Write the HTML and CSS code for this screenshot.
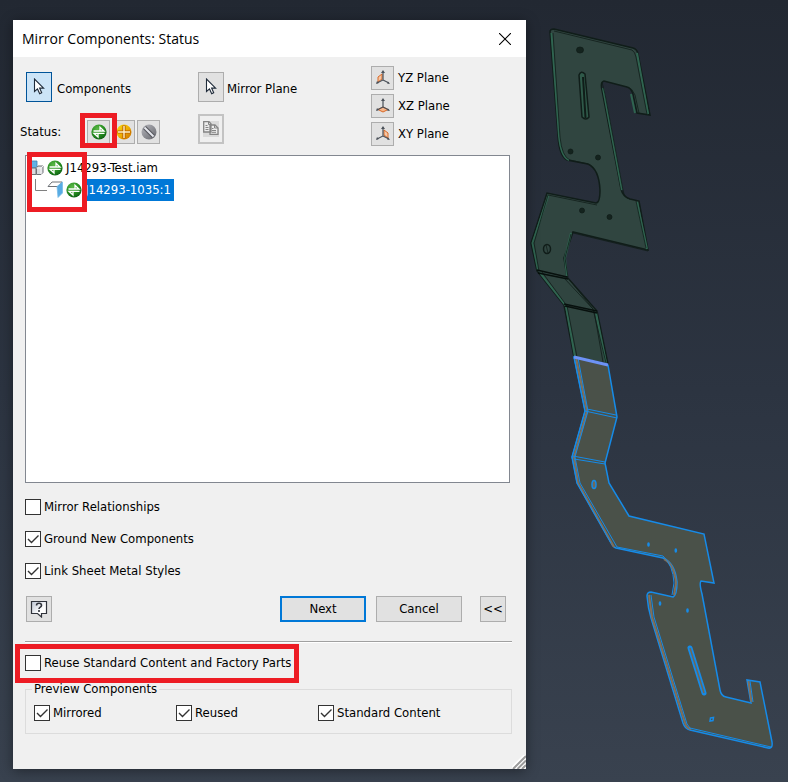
FILE: index.html
```html
<!DOCTYPE html>
<html lang="en">
<head>
  <meta charset="UTF-8">
  <meta name="viewport" content="width=device-width, initial-scale=1">
  <title>Mirror Components: Status</title>
  <link rel="stylesheet" href="styles.css">
</head>
<body>

  <!-- shared icons -->
  <svg class="icon-defs" aria-hidden="true">
    <defs>
      <radialGradient id="green-ball" cx="40%" cy="30%" r="75%">
        <stop offset="0" stop-color="#5cba48"/>
        <stop offset="0.6" stop-color="#258c1f"/>
        <stop offset="1" stop-color="#0b5c12"/>
      </radialGradient>
      <linearGradient id="yellow-ball" x1="0" y1="0" x2="1" y2="1">
        <stop offset="0" stop-color="#f6dc18"/>
        <stop offset="0.5" stop-color="#efb000"/>
        <stop offset="1" stop-color="#c86a00"/>
      </linearGradient>
      <linearGradient id="gray-ball" x1="0" y1="0" x2="1" y2="1">
        <stop offset="0" stop-color="#b5b6bc"/>
        <stop offset="1" stop-color="#66676d"/>
      </linearGradient>
      <linearGradient id="help-fill" x1="0" y1="0" x2="1" y2="1">
        <stop offset="0" stop-color="#bcc4d2"/>
        <stop offset="0.6" stop-color="#ffffff"/>
      </linearGradient>
      <symbol id="icon-mirror" viewBox="0 0 16 16">
        <circle cx="8" cy="8" r="7.6" fill="url(#green-ball)"/>
        <path d="M2.500 7h10.500L9 3.300V7M13.500 9.300H3L7 13V9.300" fill="none" stroke="#fff" stroke-width="1.300"/>
      </symbol>
      <symbol id="icon-cursor" viewBox="0 0 12 18">
        <path d="M1.500 1v12.500l3-2.600 2.200 4.800 2-1-2.100-4.600h4z" fill="#fff" stroke="#1f2b3a" stroke-width="1.100"/>
      </symbol>
    </defs>
  </svg>

  <main class="dialog">
    <header class="title-bar">
      <h1>Mirror Components: Status</h1>
      <button class="close" type="button" aria-label="Close">
        <svg width="12" height="12" viewBox="0 0 12 12"><path d="M0 0l12 12M12 0L0 12" stroke="#000" stroke-width="1.100"/></svg>
      </button>
    </header>

    <form class="content">
      <div class="toolbar">
        <div class="tool-column">
          <div class="pick-row">
            <button class="pick active" type="button" id="pick-components">
              <svg width="12" height="18"><use href="#icon-cursor"/></svg>
            </button>
            <label for="pick-components">Components</label>
          </div>
          <div class="status-row">
            <span class="status-label">Status:</span>
            <button class="small" type="button" aria-label="Mirror">
              <svg width="16" height="16"><use href="#icon-mirror"/></svg>
            </button>
            <button class="small" type="button" aria-label="Reuse">
              <svg width="16" height="16" viewBox="0 0 16 16">
                <circle cx="8" cy="8" r="7.500" fill="url(#yellow-ball)"/>
                <path d="M8 1.500v13M1.500 8h13" stroke="#b85c00" stroke-width="3.200"/>
                <path d="M8 2v12M2 8h12" stroke="#fff3c4" stroke-width="1.400"/>
              </svg>
            </button>
            <button class="small" type="button" aria-label="Exclude">
              <svg width="16" height="16" viewBox="0 0 16 16">
                <circle cx="8" cy="8" r="7.500" fill="url(#gray-ball)"/>
                <path d="M3.500 3.500l9 9" stroke="#55565c" stroke-width="4"/>
                <path d="M3.500 3.500l9 9" stroke="#e6e8ee" stroke-width="2"/>
              </svg>
            </button>
            <span class="highlight highlight-status"></span>
          </div>
        </div>

        <div class="tool-column">
          <div class="pick-row plane-pick">
            <button class="pick" type="button" id="pick-plane">
              <svg width="12" height="18"><use href="#icon-cursor"/></svg>
            </button>
            <label for="pick-plane">Mirror Plane</label>
          </div>
          <button class="pick copy" type="button" aria-label="Copy" disabled>
            <svg width="16" height="16" viewBox="0 0 16 16">
              <path d="M0 0h16v16H0z" fill="#dadada"/>
              <path d="M.700.700h5.300l2 2V11H.700zM7 4h5l3 3v6.300H7z" fill="#ececec" stroke="#858585" stroke-width="1.300"/>
              <path d="M5.500 1v2.500H8M11.500 4v3H15M2.500 4.500h2M2.500 6.500h3M2.500 8.500h3M9 7.500h1.500M9 9.500h4M9 11.300h4" fill="none" stroke="#858585"/>
            </svg>
          </button>
        </div>

        <div class="planes">
          <div class="plane-row">
            <button class="small" type="button" id="yz">
              <svg width="16" height="16" viewBox="0 0 16 16">
                <path d="M3 7l4-3v5l-4 3z" fill="#f5c7a5" stroke="#d96826"/>
                <path d="M8 2v8l-6 3M8 10l6 3" fill="none" stroke="#4a5058" stroke-width="1.200"/>
                <path d="M8 0l2 3H6zM1 14l1-3 2 2zM15 14l-3-.500 1-2z" fill="#4a5058"/>
              </svg>
            </button>
            <label for="yz">YZ Plane</label>
          </div>
          <div class="plane-row">
            <button class="small" type="button" id="xz">
              <svg width="16" height="16" viewBox="0 0 16 16">
                <path d="M8 9l5 2.500L8 14l-5-2.500z" fill="#f5b58a" stroke="#d96826"/>
                <path d="M8 2v7l-6 3M8 9l6 3" fill="none" stroke="#4a5058" stroke-width="1.200"/>
                <path d="M8 0l2 3H6zM1 13l1-3 2 2zM15 13l-3-.500 1-2z" fill="#4a5058"/>
              </svg>
            </button>
            <label for="xz">XZ Plane</label>
          </div>
          <div class="plane-row">
            <button class="small" type="button" id="xy">
              <svg width="16" height="16" viewBox="0 0 16 16">
                <path d="M9 4l4 3v5l-4-3z" fill="#f5c7a5" stroke="#d96826"/>
                <path d="M8 2v8l-6 3M8 10l6 3" fill="none" stroke="#4a5058" stroke-width="1.200"/>
                <path d="M8 0l2 3H6zM1 14l1-3 2 2zM15 14l-3-.500 1-2z" fill="#4a5058"/>
              </svg>
            </button>
            <label for="xy">XY Plane</label>
          </div>
        </div>
      </div>

      <div class="tree-box">
        <ul class="tree">
          <li>
            <svg class="assembly" width="16" height="16" viewBox="0 0 16 16">
              <path d="M0 2l1-1h5V8H0z" fill="#63b2e6" stroke="#3d83b5" stroke-width=".800"/>
              <path d="M0 8h5v6.500H0zM5.500 8l1.500-2h5v6.500l-2 2H5.500z" fill="#d9dbe0" stroke="#6f7277"/>
              <path d="M5.500 8h4.500v6M10 8l2-2" fill="none" stroke="#f7f7f7"/>
            </svg>
            <svg width="16" height="16"><use href="#icon-mirror"/></svg>
            <span class="name">J14293-Test.iam</span>
          </li>
          <li class="child">
            <svg class="branch" width="32" height="22" viewBox="0 0 32 22">
              <path d="M4.500 0v11.500H16" fill="none" stroke="#808080"/>
              <path d="M17 7.500l4-4.500h10l-4 4.500z" fill="#fff" stroke="#6f7277"/>
              <path d="M26 7.500l5.500-4.500V14L27 18.500z" fill="#57abe3" stroke="#79bce8" stroke-width=".800"/>
            </svg>
            <svg width="16" height="16"><use href="#icon-mirror"/></svg>
            <span class="name selected">J14293-1035:1</span>
          </li>
        </ul>
        <span class="highlight highlight-tree"></span>
      </div>

      <div class="options">
        <label class="check"><input type="checkbox">Mirror Relationships</label>
        <label class="check"><input type="checkbox" checked>Ground New Components</label>
        <label class="check"><input type="checkbox" checked>Link Sheet Metal Styles</label>
      </div>

      <div class="actions">
        <button class="help" type="button" aria-label="Help">
          <svg width="18" height="18" viewBox="0 0 18 18">
            <path d="M1.500 1.500h15v12h-5V17L7.500 13.500h-6z" fill="url(#help-fill)" stroke="#30333b" stroke-width="1.200"/>
            <path d="M6.500 5.500c0-3 5-3 5 0 0 1.700-2.500 1.600-2.500 3.500M9 10v2" fill="none" stroke="#30333b" stroke-width="1.600"/>
          </svg>
        </button>
        <button class="command default" type="button">Next</button>
        <button class="command" type="button">Cancel</button>
        <button class="less" type="button">&lt;&lt;</button>
      </div>

      <div class="reuse">
        <label class="check"><input type="checkbox">Reuse Standard Content and Factory Parts</label>
        <span class="highlight highlight-reuse"></span>
      </div>

      <fieldset class="preview">
        <legend>Preview Components</legend>
        <label class="check"><input type="checkbox" checked>Mirrored</label>
        <label class="check"><input type="checkbox" checked>Reused</label>
        <label class="check"><input type="checkbox" checked>Standard Content</label>
      </fieldset>
    </form>

    <svg class="grip" width="14" height="14" viewBox="0 0 14 14">
      <path d="M0 14L14 0M5 14l9-9M10 14l4-4" stroke="#fff" stroke-width="4"/>
      <path d="M1 14L14 1M5.500 14L14 5.500M10 14l4-4" stroke="#9a9a9a" stroke-width="2"/>
    </svg>
  </main>

  <svg class="model" viewBox="526 0 262 782" role="img" aria-label="Mirrored sheet metal part">
    <!-- new mirrored part -->
    <g class="part-new">
      <path class="face" d="M550 32Q550 29 554 29L633 48Q637 49 638 54L650 115L637 113L633 94Q631 88 627 87L604 81Q600 82 602 90L621 189Q623 197 630 199L639 201L648 250L573 232L564 258L567 277L597 311L608 364L574 357L564 305L537 271L531 243L547 193L596 203Q600 203 600 190Q599 169 588 164L567 160Q559 156 558 135Z"/>
      <path class="side" d="M551.500 33L559 136Q561 157 569 160M637 53L648 114M635 113L631 94M603 88L622 190M637 202L647 249M548.500 195L532.500 243L538 270M540 273L566 306L575 357M571 233L565 258L567 276M596 313L606 363"/>
      <path d="M553 33L560 137Q562 157 570 160L588 164M554 31L632 50Q635 52 636 57L647 114M639 113L635 95Q632 88 628 87M602 82L605 94L623 190Q624 198 630 199M636 201L646 248M573 233L648 251M548 195L534 243L539 271M548 195L597 205M571 234L565 258L568 277M542 272L567 306L577 357M569 279L593 309L606 363M564 278L593 309M594 311L603 362"/>
      <path class="bend" d="M537 270L567 277M538 273L568 279M564 304L597 311M565 306L597 313"/>
      <path class="slot" d="M579 75Q581 70 585 74L589 117Q586 121 582 117Z"/>
      <path class="slot-line" d="M583 77L585.500 118"/>
      <g class="holes">
        <ellipse cx="580" cy="50" rx="3.500" ry="3"/>
        <circle cx="570.500" cy="151.500" r="2.500"/>
        <circle cx="598" cy="157.500" r="2.500"/>
        <circle cx="582" cy="210.500" r="2.500"/>
        <circle cx="609.500" cy="217" r="2.500"/>
      </g>
      <ellipse class="face" cx="547" cy="249" rx="3.500" ry="4.500"/>
      <path d="M546 245l2 8"/>
    </g>

    <!-- source part, selected -->
    <g class="part-source">
      <path class="face" d="M574 357L608 365L617 417L605 463L609 483L629 516L704 534L714 583L701 581Q699 583 702 594L720 690Q721 696 726 697L751 703L747 680L760 682L772 742Q773 749 768 748L690 730Q685 729 683 723L651 618Q648 608 647 596Q647 592 651 592L673 597Q677 595 677 582Q675 563 663 558L616 548Q613 547 611 543L577 483L572 457L585 411Z"/>
      <path class="side" d="M576 358L587 411L574 457L578 483L614 547M664 559Q674 564 676 583L674 595M649 595L652 617L685 723Q687 729 691 729M748.500 681L751.500 702"/>
      <path d="M578 358L588 411L575 457L580 483L617 547L663 556Q673 565 674 583L672 595M651 595L654 617L687 724L690 728L771 747M750 681L753 702M585 411L617 418M587 409L616 415M573 456L605 462M574 459L605 464M574 357L585 411L572 457L577 483L611 543"/>
      <ellipse class="side-hole" cx="594" cy="484.500" rx="2" ry="4"/>
      <path class="long-slot" d="M690 648L704 693"/>
      <path class="long-slot-inner" d="M690 648L704 693"/>
      <g class="holes">
        <ellipse cx="648.500" cy="544.500" rx=".600" ry="1.500"/>
        <ellipse cx="675.800" cy="550.500" rx=".600" ry="1.500"/>
        <ellipse cx="660" cy="603.500" rx=".600" ry="1.500"/>
        <ellipse cx="687.500" cy="610.500" rx=".600" ry="1.500"/>
        <path d="M710.500 718l3-.500-.500 3-3 .500z"/>
      </g>
    </g>
    <path class="mirror-edge" d="M574 357L608 365"/>
  </svg>

</body>
</html>
```
FILE: styles.css
```css
* {
  box-sizing: border-box;
}

body {
  margin: 0;
  min-height: 100vh;
  display: flex;
  align-items: flex-start;
  background: linear-gradient(#222832, #2c3441 50%, #39424f);
  font-family: "DejaVu Sans Condensed", Tahoma, sans-serif;
  font-size: 13px;
  line-height: 16px;
  color: #000;
}

button {
  display: flex;
  align-items: center;
  justify-content: center;
  padding: 0;
  border: 1px solid #adadad;
  background: #e1e1e1;
  font: inherit;
  color: inherit;
}

.icon-defs {
  position: absolute;
  width: 0;
  height: 0;
}

/* Dialog */
.dialog {
  position: relative;
  flex: 1;
  min-width: 0;
  min-height: calc(100vh - 33px);
  margin: 20px 0 13px 13px;
  display: flex;
  flex-direction: column;
  background: #f0f0f0;
  box-shadow: 0 2px 12px rgba(0, 0, 0, 0.4);
}

.title-bar {
  display: flex;
  justify-content: space-between;
  align-items: center;
  height: 37px;
  padding: 0 15px 0 9px;
  background: #fff;
}

h1 {
  margin: 0;
  font-family: "Open Sans", "Segoe UI", sans-serif;
  font-size: 14px;
  font-weight: normal;
}

.close {
  border: none;
  background: none;
}

.content {
  flex: 1;
  display: flex;
  flex-direction: column;
  padding: 9px 14px 35px 12px;
}

/* Toolbar */
.toolbar {
  display: grid;
  grid-template-columns: 173px 173px 1fr;
}

.tool-column {
  display: flex;
  flex-direction: column;
  gap: 12px;
  padding-top: 6px;
}

.pick-row {
  display: flex;
  align-items: center;
  gap: 5px;
  padding-left: 1px;
}

.pick-row label {
  padding-top: 4px;
}

.plane-pick {
  gap: 3px;
  padding-left: 0;
}

.pick {
  width: 26px;
  height: 30px;
}

.pick.active {
  border-color: #005499;
  background: #cce4f7;
}

.copy {
  border: 2px solid #c3c3c3;
  background: #efefef;
}

.small {
  width: 23px;
  height: 24px;
}

.status-row {
  position: relative;
  display: flex;
  align-items: flex-end;
  gap: 2px;
  height: 30px;
  margin-left: -5px;
}

.status-label {
  width: 65px;
  line-height: 24px;
}

.planes {
  display: flex;
  flex-direction: column;
  gap: 4px;
}

.plane-row {
  display: flex;
  align-items: center;
  gap: 4px;
}

/* Component tree */
.tree-box {
  position: relative;
  flex: 1;
  min-height: 120px;
  margin: 9px 2px 0 0;
  border: 1px solid #828790;
  background: #fff;
}

.tree {
  list-style: none;
  margin: 0;
  padding: 1px 0 0 5px;
}

.tree li {
  display: flex;
  align-items: center;
  height: 22px;
}

.tree .name {
  padding: 0 3px;
  line-height: 22px;
}

.tree .selected {
  background: #0078d7;
  color: #fff;
}

.branch {
  margin-right: 3px;
}

/* Check boxes */
.check {
  display: flex;
  align-items: center;
  gap: 3px;
}

.check input {
  appearance: none;
  width: 16px;
  height: 16px;
  margin: 0;
  border: 1px solid #333;
  background: #fff;
}

.check input:checked {
  background: #fff url("data:image/svg+xml,%3Csvg xmlns='http://www.w3.org/2000/svg' viewBox='0 0 14 14'%3E%3Cpath d='M2 7l3.500 3.500L12.500 3.500' fill='none' stroke='%23333' stroke-width='1.400'/%3E%3C/svg%3E");
}

.options {
  display: flex;
  flex-direction: column;
  align-items: flex-start;
  gap: 16px;
  margin-top: 16px;
}

/* Buttons */
.actions {
  display: flex;
  gap: 10px;
  margin-top: 17px;
  padding: 0 6px 19px 1px;
  border-bottom: 1px solid #a0a0a0;
  box-shadow: 0 1px #fff;
}

.actions button {
  height: 26px;
}

.actions .help {
  width: 26px;
  margin-right: auto;
}

.command {
  width: 86px;
}

.default {
  border: 2px solid #0078d7;
}

.less {
  width: 26px;
  margin-left: 8px;
}

.reuse {
  position: relative;
  display: flex;
  margin-top: 13px;
}

.preview {
  display: grid;
  grid-template-columns: 142px 142px 1fr;
  margin: 10px 0 0;
  padding: 8px 8px 12px;
  border: 1px solid #dcdcdc;
}

.preview legend {
  margin-left: -2px;
  padding: 0 2px;
}

/* Red marks over the controls */
.highlight {
  position: absolute;
  border: 5px solid #ed1c24;
}

.highlight-status {
  top: -1px;
  left: 60px;
  width: 37px;
  height: 35px;
}

.highlight-tree {
  top: -4px;
  left: 1px;
  width: 60px;
  height: 60px;
}

.highlight-reuse {
  top: -11px;
  left: -10px;
  width: 284px;
  height: 39px;
}

.grip {
  position: absolute;
  right: 0;
  bottom: 0;
}

/* 3D model */
.model {
  flex: 0 1 262px;
  min-width: 120px;
  fill: none;
}

.part-new {
  stroke: #101d19;
  stroke-width: 0.8;
}

.part-new .face {
  fill: #304540;
  stroke-width: 1.5;
}

.part-new .side {
  stroke: #2f6450;
  stroke-width: 2;
}

.part-new .bend {
  stroke: #07100d;
  stroke-width: 1.5;
}

.part-new .slot {
  fill: #2f5949;
  stroke-width: 1.5;
}

.part-new .slot-line {
  stroke-width: 2;
}

.part-new .holes {
  fill: #14231e;
}

.part-source {
  stroke: #168be8;
  stroke-width: 1;
}

.part-source .face {
  fill: #4a5149;
  stroke-width: 1.5;
}

.part-source .side {
  stroke: #80705c;
  stroke-width: 2;
}

.side-hole {
  fill: #70695a;
  stroke-width: 1.5;
}

.long-slot {
  stroke-width: 5;
  stroke-linecap: round;
}

.long-slot-inner {
  stroke: #706858;
  stroke-width: 1.5;
}

.part-source .holes {
  stroke-width: 1.5;
}

.mirror-edge {
  stroke: #6d92f5;
  stroke-width: 3;
}
```
